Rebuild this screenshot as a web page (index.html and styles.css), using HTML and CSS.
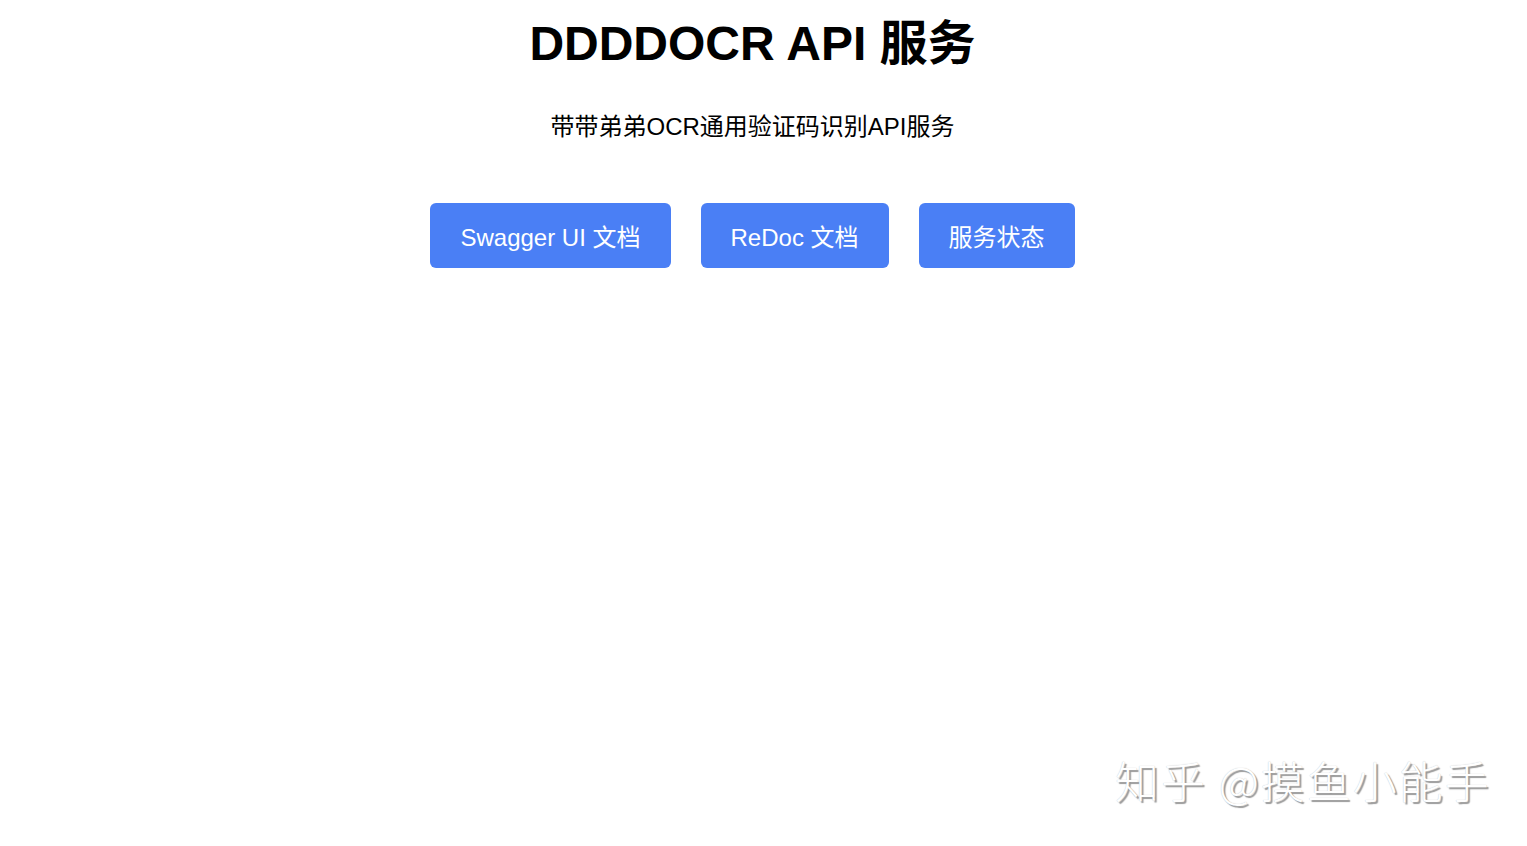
FILE: index.html
```html
<!doctype html>
<html lang="zh-CN">
  <head>
    <meta charset="utf-8" />
    <meta name="viewport" content="width=device-width" />
    <title>DDDDOCR API 服务</title>
    <link rel="stylesheet" href="styles.css">
  </head>

  <body>
    <main class="page">
      <h1 class="title">DDDDOCR API 服务</h1>
      <p class="intro">带带弟弟OCR通用验证码识别API服务</p>
      <nav class="links">
        <a class="btn" href="/docs">Swagger UI 文档</a>
        <a class="btn" href="/redoc">ReDoc 文档</a>
        <a class="btn" href="/health">服务状态</a>
      </nav>
    </main>

    <div class="watermark">知乎 @摸鱼小能手</div>
  </body>
</html>
```

FILE: styles.css
```css
html,
body {
  margin: 0;
  height: 100%;
  background: #fff;
}

body {
  font-family: "Liberation Sans", Arial, "Noto Sans CJK SC", sans-serif;
  color: #000;
  position: relative;
  overflow: hidden;
}

.page {
  width: 1505px;
  display: flex;
  flex-direction: column;
  align-items: center;
  padding-top: 14px;
}

.title {
  margin: 0;
  font-size: 48px;
  font-weight: bold;
  line-height: 60px;
}

.intro {
  margin: 38px 0 0;
  font-size: 24px;
  line-height: 30px;
}

.links {
  display: flex;
  gap: 30px;
  margin-top: 61px;
}

.btn {
  display: block;
  padding: 20px 30px 16px;
  background: #4a7ff5;
  color: #fff;
  font-size: 24px;
  line-height: 29px;
  text-decoration: none;
  border-radius: 6px;
}

/* zhihu style stamp, bottom right */
.watermark {
  position: absolute;
  left: 1115px;
  top: 752px;
  font-family: "Noto Sans CJK SC", sans-serif;
  font-size: 44px;
  font-weight: 300;
  line-height: 56px;
  letter-spacing: 2px;
  color: #fff;
  text-shadow: 2px 2px 1px #9a9a9a, 0 0 1px #bbb;
  white-space: nowrap;
}
```
